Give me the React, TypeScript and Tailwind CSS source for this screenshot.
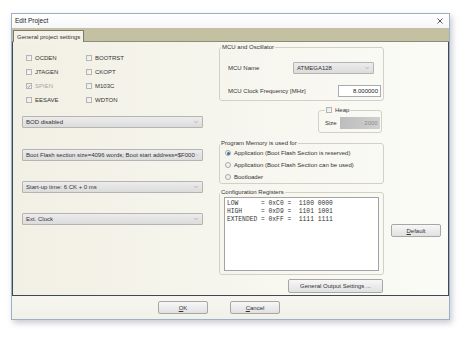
import { ChevronDown } from "lucide-react"

function Check({ label, checked, disabled }: { label: string; checked?: boolean; disabled?: boolean }) {
  return (
    <div className="h-[14px] flex items-center gap-[3px]">
      <span className="w-[6px] h-[6px] border border-[#b5b5b5] bg-gradient-to-br from-[#e6e6e6] to-[#fbfbfb] flex items-center justify-center">
        {checked && (
          <svg width="5" height="5" viewBox="0 0 5 5">
            <path d="M0.6 2.6 L2 4 L4.4 0.8" stroke="#8a8a8a" strokeWidth="0.9" fill="none" />
          </svg>
        )}
      </span>
      <span className={disabled ? "text-[#a8a8a8]" : "text-[#333]"}>{label}</span>
    </div>
  )
}

function Combo({ text, className }: { text: string; className: string }) {
  return (
    <div className={"h-[12px] flex items-center justify-between pl-[3px] pr-[3px] border border-[#b4b4b4] bg-gradient-to-b from-[#ececec] to-[#dcdcdc] rounded-[1px] " + className}>
      <span className="text-[#333] whitespace-nowrap">{text}</span>
      <ChevronDown size={6} strokeWidth={2} color="#8d8d8d" />
    </div>
  )
}

function Radio({ label, on }: { label: string; on?: boolean }) {
  return (
    <div className="h-[12px] flex items-center gap-[3px]">
      <span className="w-[6px] h-[6px] rounded-full border border-[#a9a9a9] bg-[#f2f2f2] flex items-center justify-center">
        {on && <span className="w-[3px] h-[3px] rounded-full bg-[#2f6fb6]" />}
      </span>
      <span className="text-[#333]">{label}</span>
    </div>
  )
}

function Btn({ children, className }: { children: React.ReactNode; className: string }) {
  return (
    <div className={"flex items-center justify-center border border-[#a7a7a7] rounded-[2px] bg-gradient-to-b from-[#f7f7f7] to-[#e1e1e1] text-[#333] " + className}>
      {children}
    </div>
  )
}

export default function App() {
  return (
    <div className="w-[474px] h-[338px] bg-white overflow-hidden font-['Liberation_Sans',sans-serif] text-[6px] leading-[8px]">
      <div className="ml-[11px] mt-[13px] w-[439px] h-[307px] border border-[#9cb1c8] bg-[#f3f2ec] shadow-[2px_3px_6px_rgba(60,70,90,0.28)] flex flex-col">
        <div className="h-[14px] bg-gradient-to-b from-white to-[#f6f7f9] flex items-center justify-between pl-[3px] pr-[6px]">
          <span className="text-[6.5px] text-[#222]">Edit Project</span>
          <svg width="6" height="6" viewBox="0 0 6 6">
            <path d="M0.5 0.5 L5.5 5.5 M5.5 0.5 L0.5 5.5" stroke="#555" strokeWidth="1" />
          </svg>
        </div>
        <div className="h-[14px] bg-[#c4c1a2] flex items-end pl-[1px] border-b border-[#8d8b7c]">
          <div className="h-[12px] px-[3px] -mb-[1px] bg-[#f4f2e8] border border-b-0 border-[#7c7a6c] flex items-center text-[#333]">
            General project settings
          </div>
        </div>
        <div className="h-[254px] border border-t-0 border-[#3f4853] bg-gradient-to-r from-[#f2f0e4] to-[#fbfbf7] flex pl-[9px]">
          <div className="w-[181px] flex flex-col">
            <div className="mt-[9px] pl-[4px] grid grid-cols-[60px_60px]">
              <Check label="OCDEN" />
              <Check label="BOOTRST" />
              <Check label="JTAGEN" />
              <Check label="CKOPT" />
              <Check label="SPIEN" checked disabled />
              <Check label="M103C" />
              <Check label="EESAVE" />
              <Check label="WDTON" />
            </div>
            <Combo text="BOD disabled" className="mt-[9px]" />
            <Combo text="Boot Flash section size=4096 words; Boot start address=$F000" className="mt-[21px]" />
            <Combo text="Start-up time: 6 CK + 0 ms" className="mt-[20px]" />
            <Combo text="Ext. Clock" className="mt-[20px]" />
          </div>

          <div className="ml-[16px] w-[165px] flex flex-col">
            <fieldset className="mt-[1px] border border-[#d3d1c6] rounded-[3px] pb-[3px]">
              <legend className="ml-[1px] px-[1px] text-[#333]">MCU and Oscillator</legend>
              <div className="mt-[11px] h-[12px] flex items-center justify-between pl-[8px] pr-[9px]">
                <span className="text-[#333]">MCU Name</span>
                <Combo text="ATMEGA128" className="w-[81px]" />
              </div>
              <div className="mt-[11px] h-[12px] flex items-center justify-between pl-[8px] pr-[2px]">
                <span className="text-[#333]">MCU Clock Frequency [MHz]</span>
                <div className="w-[43px] h-[12px] border border-[#a9abb2] bg-white flex items-center justify-end pr-[2px] text-[#222]">8.000000</div>
              </div>
            </fieldset>

            <fieldset className="mt-[5px] ml-[99px] w-[64px] border border-[#d3d1c6] rounded-[3px] pb-[3px]">
              <legend className="ml-[6px] px-[1px] flex items-center gap-[3px] text-[#333]">
                <span className="w-[6px] h-[6px] border border-[#b5b5b5] bg-gradient-to-br from-[#e6e6e6] to-[#fbfbfb]" />
                Heap
              </legend>
              <div className="mt-[3px] h-[12px] flex items-center gap-[3px] pl-[6px]">
                <span className="text-[#333]">Size</span>
                <div className="w-[40px] h-[12px] bg-gradient-to-r from-[#bdbdbd] to-[#d0d0d0] flex items-center justify-end pr-[2px] text-[#8c8c8c]">2000</div>
              </div>
            </fieldset>

            <fieldset className="mt-[6px] border border-[#d3d1c6] rounded-[3px]">
              <legend className="px-[1px] text-[#333]">Program Memory is used for</legend>
              <div className="pl-[5px]">
                <Radio label="Application (Boot Flash Section is reserved)" on />
                <Radio label="Application (Boot Flash Section can be used)" />
                <Radio label="Bootloader" />
              </div>
            </fieldset>

            <fieldset className="mt-[4px] border border-[#d3d1c6] rounded-[3px] pb-[3px]">
              <legend className="px-[1px] text-[#333]">Configuration Registers</legend>
              <div className="mt-[1px] ml-[4px] w-[155px] h-[74px] border border-[#a3a3a3] bg-white pl-[2px] pt-[2px] font-['Liberation_Mono',monospace] text-[6.3px] leading-[8px] text-[#333] whitespace-pre">
                {"LOW      = 0xC0 =  1100 0000\nHIGH     = 0xD9 =  1101 1001\nEXTENDED = 0xFF =  1111 1111"}
              </div>
            </fieldset>

            <Btn className="mt-[4px] ml-auto mr-[1px] w-[95px] h-[14px]">General Output Settings ...</Btn>
          </div>

          <div className="ml-[7px] flex flex-col">
            <Btn className="mt-[182px] w-[50px] h-[13px]">
              <span><span className="underline">D</span>efault</span>
            </Btn>
          </div>
        </div>

        <div className="flex-1 flex items-start pt-[5px] pl-[146px] gap-[22px] bg-gradient-to-b from-[#f6f5ef] to-[#f1f0e9]">
          <Btn className="w-[50px] h-[13px] border-[#6e8fb5]">
            <span><span className="underline">O</span>K</span>
          </Btn>
          <Btn className="w-[50px] h-[13px]">
            <span><span className="underline">C</span>ancel</span>
          </Btn>
        </div>
      </div>
    </div>
  )
}
